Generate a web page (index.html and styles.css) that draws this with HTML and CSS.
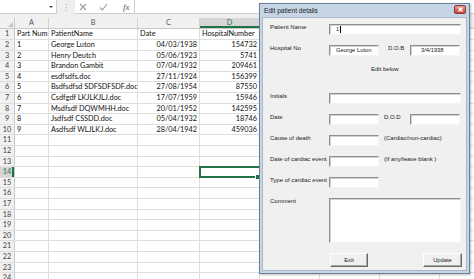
FILE: index.html
```html
<!DOCTYPE html>
<html>
<head>
<meta charset="utf-8">
<link rel="stylesheet" href="styles.css">
</head>
<body>
<div class="fbar">
  <div class="namebox"><span class="arrow"></span></div>
  <div class="grip">⋮</div>
  <div class="fbtns">
    <svg class="ico" width="8" height="8" viewBox="0 0 8 8"><path d="M1 1L7 7M7 1L1 7" stroke="#9c9c9c" stroke-width="1.1" fill="none"/></svg>
    <svg class="ico" width="9" height="8" viewBox="0 0 9 8"><path d="M1 4.5L3.4 7L8 1" stroke="#9c9c9c" stroke-width="1.1" fill="none"/></svg>
    <span class="fx">fx</span>
  </div>
  <div class="formula"></div>
</div>

<div class="sheet">
  <div class="row hdr">
    <i class="rh corner"><b class="tri"></b></i><i class="ca">A</i><i class="cb">B</i><i class="cc">C</i><i class="cd selh">D</i><i class="ce">E</i><i class="ce">F</i><i class="ce">G</i>
  </div>
  <div class="body">
    <div class="row"><i class="rh">1</i><i class="ca">Part Num</i><i class="cb">PatientName</i><i class="cc">Date</i><i class="cd">HospitalNumber</i><i class="ce"></i><i class="ce"></i><i class="ce"></i></div>
    <div class="row"><i class="rh">2</i><i class="ca">1</i><i class="cb">George Luton</i><i class="cc r">04/03/1938</i><i class="cd r">154732</i><i class="ce"></i><i class="ce"></i><i class="ce"></i></div>
    <div class="row"><i class="rh">3</i><i class="ca">2</i><i class="cb">Henry Deutch</i><i class="cc r">05/06/1923</i><i class="cd r">5741</i><i class="ce"></i><i class="ce"></i><i class="ce"></i></div>
    <div class="row"><i class="rh">4</i><i class="ca">3</i><i class="cb">Brandon Gambit</i><i class="cc r">07/04/1932</i><i class="cd r">209461</i><i class="ce"></i><i class="ce"></i><i class="ce"></i></div>
    <div class="row"><i class="rh">5</i><i class="ca">4</i><i class="cb">esdfsdfs.doc</i><i class="cc r">27/11/1924</i><i class="cd r">156399</i><i class="ce"></i><i class="ce"></i><i class="ce"></i></div>
    <div class="row"><i class="rh">6</i><i class="ca">5</i><i class="cb">Bsdfsdfsd SDFSDFSDF.doc</i><i class="cc r">27/08/1954</i><i class="cd r">87550</i><i class="ce"></i><i class="ce"></i><i class="ce"></i></div>
    <div class="row"><i class="rh">7</i><i class="ca">6</i><i class="cb">Csdfgdf LKJLKJLJ.doc</i><i class="cc r">17/07/1959</i><i class="cd r">15946</i><i class="ce"></i><i class="ce"></i><i class="ce"></i></div>
    <div class="row"><i class="rh">8</i><i class="ca">7</i><i class="cb">Msdfsdf DQWMHH.doc</i><i class="cc r">20/01/1952</i><i class="cd r">142595</i><i class="ce"></i><i class="ce"></i><i class="ce"></i></div>
    <div class="row"><i class="rh">9</i><i class="ca">8</i><i class="cb">Jsdfsdf CSSDD.doc</i><i class="cc r">05/04/1932</i><i class="cd r">18746</i><i class="ce"></i><i class="ce"></i><i class="ce"></i></div>
    <div class="row"><i class="rh">10</i><i class="ca">9</i><i class="cb">Asdfsdf WLJLKJ.doc</i><i class="cc r">28/04/1942</i><i class="cd r">459036</i><i class="ce"></i><i class="ce"></i><i class="ce"></i></div>
    <div class="row"><i class="rh">11</i><i class="ca"></i><i class="cb"></i><i class="cc"></i><i class="cd"></i><i class="ce"></i><i class="ce"></i><i class="ce"></i></div>
    <div class="row"><i class="rh">12</i><i class="ca"></i><i class="cb"></i><i class="cc"></i><i class="cd"></i><i class="ce"></i><i class="ce"></i><i class="ce"></i></div>
    <div class="row"><i class="rh">13</i><i class="ca"></i><i class="cb"></i><i class="cc"></i><i class="cd"></i><i class="ce"></i><i class="ce"></i><i class="ce"></i></div>
    <div class="row"><i class="rh selr">14</i><i class="ca"></i><i class="cb"></i><i class="cc"></i><i class="cd active"></i><i class="ce"></i><i class="ce"></i><i class="ce"></i></div>
    <div class="row"><i class="rh">15</i><i class="ca"></i><i class="cb"></i><i class="cc"></i><i class="cd"></i><i class="ce"></i><i class="ce"></i><i class="ce"></i></div>
    <div class="row"><i class="rh">16</i><i class="ca"></i><i class="cb"></i><i class="cc"></i><i class="cd"></i><i class="ce"></i><i class="ce"></i><i class="ce"></i></div>
    <div class="row"><i class="rh">17</i><i class="ca"></i><i class="cb"></i><i class="cc"></i><i class="cd"></i><i class="ce"></i><i class="ce"></i><i class="ce"></i></div>
    <div class="row"><i class="rh">18</i><i class="ca"></i><i class="cb"></i><i class="cc"></i><i class="cd"></i><i class="ce"></i><i class="ce"></i><i class="ce"></i></div>
    <div class="row"><i class="rh">19</i><i class="ca"></i><i class="cb"></i><i class="cc"></i><i class="cd"></i><i class="ce"></i><i class="ce"></i><i class="ce"></i></div>
    <div class="row"><i class="rh">20</i><i class="ca"></i><i class="cb"></i><i class="cc"></i><i class="cd"></i><i class="ce"></i><i class="ce"></i><i class="ce"></i></div>
    <div class="row"><i class="rh">21</i><i class="ca"></i><i class="cb"></i><i class="cc"></i><i class="cd"></i><i class="ce"></i><i class="ce"></i><i class="ce"></i></div>
    <div class="row"><i class="rh">22</i><i class="ca"></i><i class="cb"></i><i class="cc"></i><i class="cd"></i><i class="ce"></i><i class="ce"></i><i class="ce"></i></div>
    <div class="row"><i class="rh">23</i><i class="ca"></i><i class="cb"></i><i class="cc"></i><i class="cd"></i><i class="ce"></i><i class="ce"></i><i class="ce"></i></div>
    <div class="row"><i class="rh">24</i><i class="ca"></i><i class="cb"></i><i class="cc"></i><i class="cd"></i><i class="ce"></i><i class="ce"></i><i class="ce"></i></div>
  </div>
</div>

<div class="dlg">
  <div class="dlg-title">
    <span class="ttl">Edit patient details</span>
    <span class="close"><svg width="7" height="5" viewBox="0 0 7 5"><path d="M1.5 0.5L5.5 4.5M5.5 0.5L1.5 4.5" stroke="#fff" stroke-width="1.3" fill="none"/></svg></span>
  </div>
  <div class="dlg-body">
    <div class="frow"><span class="lbl">Patient Name</span><span class="tb long">1<span class="caret"></span></span></div>
    <div class="frow"><span class="lbl">Hospital No</span><span class="tb short">George Luton</span><span class="lbl2 dob">D.O.B</span><span class="tb short ind">3/4/1938</span></div>
    <div class="note">Edit below</div>
    <div class="frow"><span class="lbl">Initials</span><span class="tb long"></span></div>
    <div class="frow"><span class="lbl">Date</span><span class="tb short"></span><span class="lbl2 dod">D.O.D</span><span class="tb short"></span></div>
    <div class="frow"><span class="lbl">Cause of death</span><span class="tb short"></span><span class="lbl2">(Cardiac/non-cardiac)</span></div>
    <div class="frow"><span class="lbl">Date of cardiac event</span><span class="tb short"></span><span class="lbl2">(If any/leave blank )</span></div>
    <div class="frow"><span class="lbl">Type of cardiac event</span><span class="tb short"></span></div>
    <div class="frow"><span class="lbl">Comment</span><span class="tb long area"></span></div>
    <div class="btns"><span class="btn">Exit</span><span class="btn">Update</span></div>
  </div>
</div>
</body>
</html>
```
FILE: styles.css
```css
* { box-sizing: border-box; margin: 0; padding: 0; }
body {
  width: 474px; height: 279px; overflow: hidden;
  background: #efefef;
  font-family: Lato, "Liberation Sans", sans-serif;
  position: relative;
}

/* formula bar */
.fbar { display: flex; height: 14px; }
.namebox {
  width: 57px; background: #fff;
  border-right: 1px solid #cfcfcf; border-bottom: 1px solid #cfcfcf;
  display: flex; align-items: center; justify-content: flex-end; padding-right: 3px;
}
.arrow { width: 0; height: 0; border-left: 2px solid transparent; border-right: 2px solid transparent; border-top: 2px solid #444; }
.grip { width: 18px; display: flex; align-items: center; justify-content: center; color: #a0a0a0; font-size: 8px; font-family: "DejaVu Sans", sans-serif; }
.fbtns { width: 59px; background: #fff; display: flex; align-items: center; padding-left: 4px; gap: 12px; border-bottom: 1px solid #cfcfcf; }
.ico { display: block; }
.fx { font-family: "Liberation Serif", serif; font-style: italic; font-size: 9px; color: #555; margin-left: 3px; }
.formula { flex: 1; background: #fff; border-left: 1px solid #cfcfcf; border-bottom: 1px solid #cfcfcf; }

/* sheet */
.sheet { margin-top: 4px; background: #fff; }
.row { display: flex; height: 11px; border-bottom: 1px solid #dedede; }
.body .row:nth-child(5n+3), .body .row:nth-child(5n) { height: 10px; }
.row > i {
  flex: none; font-style: normal; display: block;
  border-right: 1px solid #dedede;
  font-size: 7.3px; line-height: 10px; color: #111;
  white-space: nowrap; overflow: hidden; padding: 0 2px;
}
.rh { width: 15px; background: #f1f1f1; color: #444 !important; text-align: center; padding: 0 !important; border-right-color: #c9c9c9 !important; }
.ca { width: 34px; }
.cb { width: 89px; }
.cc { width: 62px; }
.cd { width: 60px; }
.ce { width: 60px; }
.r { text-align: right; }
.hdr { background: #f1f1f1; border-bottom-color: #c9c9c9; }
.hdr > i { text-align: center; color: #555; border-right-color: #d2d2d2; }
.corner { display: flex !important; align-items: flex-end; justify-content: flex-end; padding: 1px !important; }
.tri { width: 0; height: 0; border-left: 5px solid transparent; border-bottom: 5px solid #c3c3c3; }
.selh { background: #d6d6d6; color: #217346 !important; box-shadow: inset 0 -2px 0 #217346; }
.selr { background: #d6d6d6 !important; color: #217346 !important; box-shadow: inset -2px 0 0 #217346; }
.active { position: relative; overflow: visible !important; outline: 2px solid #217346; outline-offset: -1px; }
.active::after { content: ""; position: absolute; right: -2px; bottom: -3px; width: 4px; height: 4px; background: #217346; border: 1px solid #fff; }

/* dialog */
.dlg {
  position: absolute; left: 259px; top: 3px; width: 211px; height: 271px;
  border: 1px solid #6d7f96;
  background: #c6d5e6;
  padding: 0 2px 2px 2px;
  display: flex; flex-direction: column;
  font-family: "Liberation Sans", Arial, sans-serif;
  box-shadow: 1px 1px 2px rgba(0,0,0,0.25);
}
.dlg-title { height: 13px; display: flex; align-items: center; justify-content: space-between; padding-left: 2px; padding-right: 1px; }
.ttl { font-size: 6.6px; color: #1b1b1b; }
.close {
  width: 12px; height: 9px; border-radius: 2px;
  background: linear-gradient(#e49a92, #c7463c);
  border: 1px solid #8e3a33;
  display: flex; align-items: center; justify-content: center;
  margin-top: -2px;
}
.close svg { display: block; }
.dlg-body {
  flex: 1; background: #f0f0f0; border: 1px solid #aab8c8;
  display: flex; flex-direction: column; gap: 10px;
  padding: 6px 0 0 7px;
  font-size: 6px; color: #1a1a1a;
}
.frow { display: flex; align-items: flex-start; }
.lbl { width: 59px; flex: none; line-height: 7px; white-space: nowrap; }
.lbl2 { line-height: 7px; margin-left: 5px; white-space: nowrap; }
.dob { margin-left: 9px; width: 22px; }
.dod { width: 26px; }
.tb {
  flex: none; height: 11px; background: #fff;
  border: 1px solid; border-color: #8f8f8f #f4f4f4 #f4f4f4 #8f8f8f;
  box-shadow: inset 1px 1px 0 #d0d0d0;
  font-size: 5.8px; line-height: 9px; padding-left: 6px; white-space: nowrap;
  display: flex; align-items: center;
}
.long { width: 132px; }
.short { width: 50px; }
.ind { padding-left: 10px; }
.area { height: 45px; }
.caret { display: inline-block; width: 1px; height: 7px; background: #000; margin-left: 1px; }
.note { margin-left: 101px; line-height: 7px; height: 7px; margin-bottom: 10px; }
.btns { display: flex; justify-content: space-between; width: 192px; padding-left: 60px; }
.btn {
  height: 14px; width: 38px; background: #f0f0f0;
  border: 1px solid; border-color: #fff #6a6a6a #6a6a6a #fff;
  box-shadow: inset -1px -1px 0 #a8a8a8;
  display: flex; align-items: center; justify-content: center; font-size: 5.8px;
}
.btn + .btn { width: 39px; }
```
